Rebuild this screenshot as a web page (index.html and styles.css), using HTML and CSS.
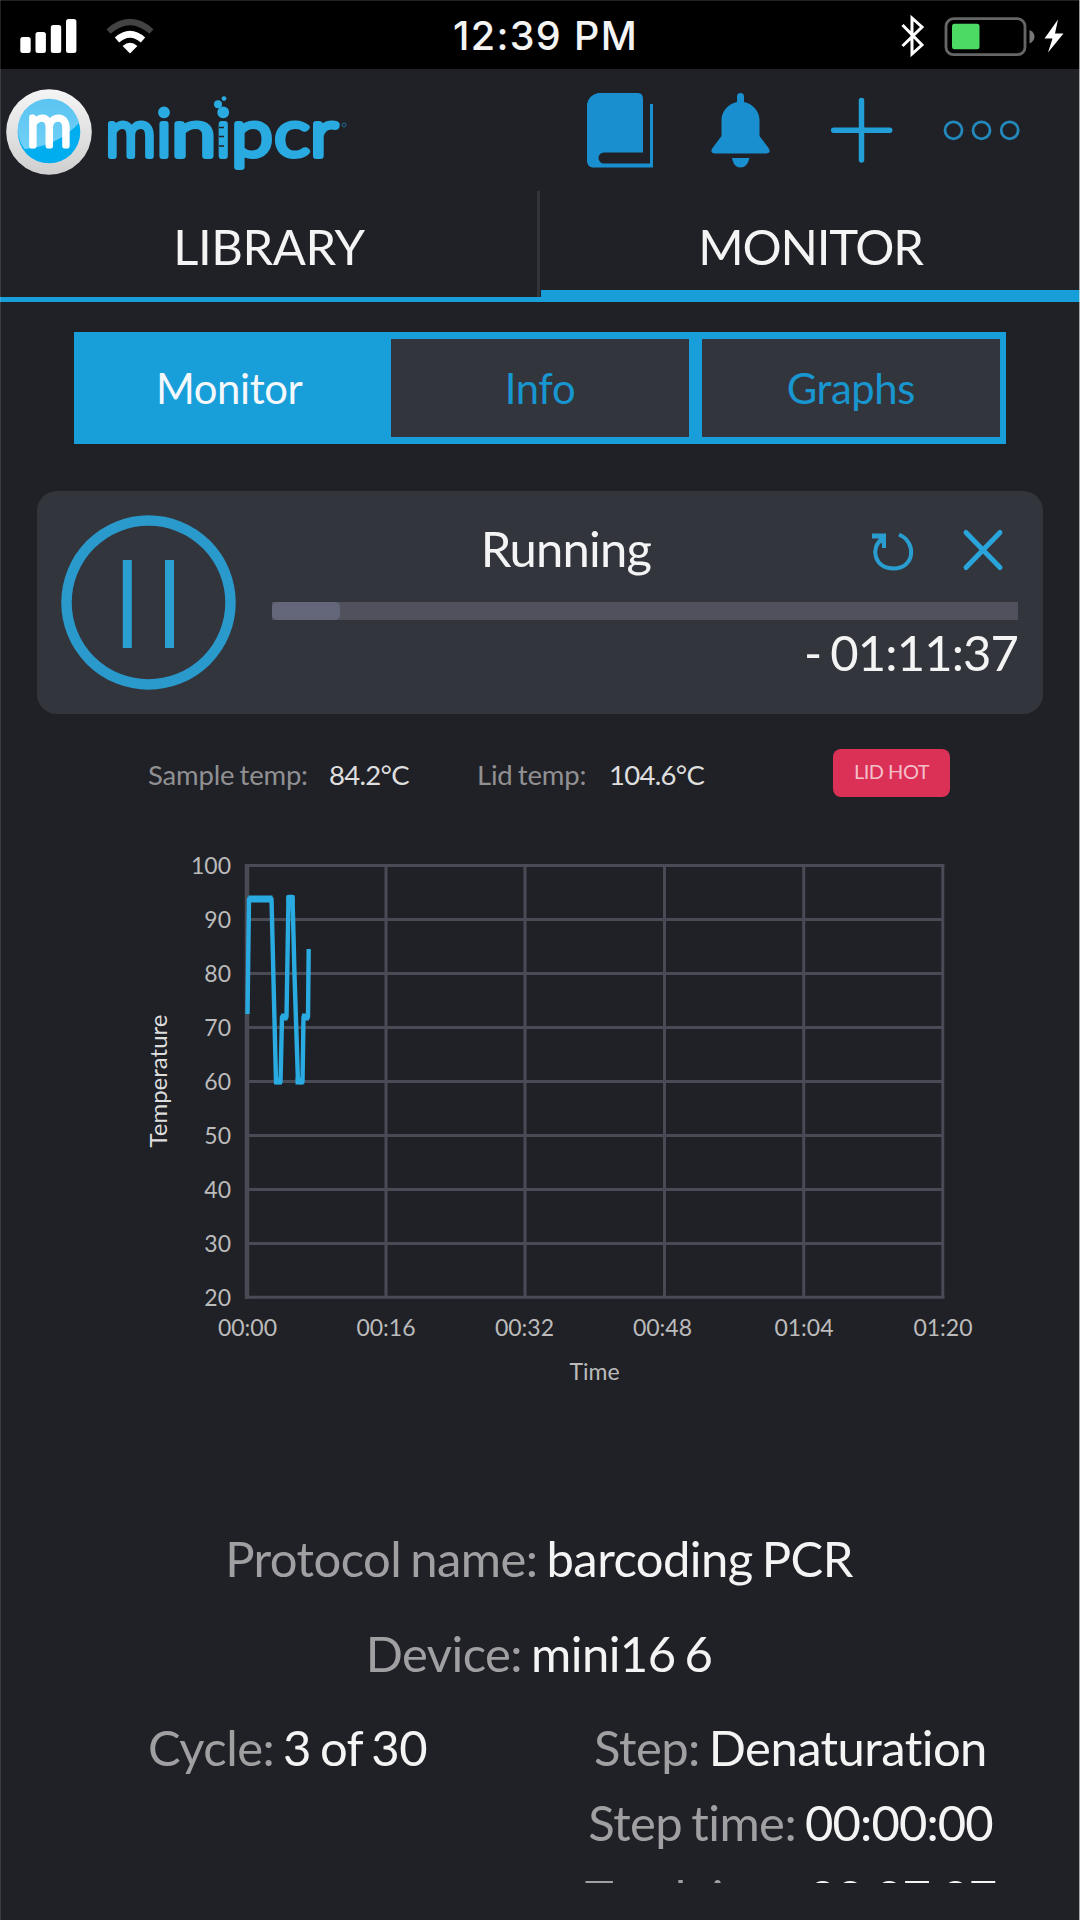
FILE: index.html
```html
<!DOCTYPE html>
<html lang="en">
<head>
<meta charset="utf-8">
<title>miniPCR Monitor</title>
<link rel="stylesheet" href="styles.css">
</head>
<body>
<div class="app">
  <div class="status">
    <svg class="status-left" width="160" height="69" viewBox="0 0 160 69">
      <g fill="#fff">
        <rect x="20.300" y="37" width="10.400" height="16" rx="2.500"/>
        <rect x="35.500" y="32" width="10.400" height="21" rx="2.500"/>
        <rect x="50.800" y="25" width="10.400" height="28" rx="2.500"/>
        <rect x="66" y="19" width="10.400" height="34" rx="2.500"/>
        <path d="M130 53.500L122.600 46Q130 39.500 137.400 46Z"/>
      </g>
      <g fill="none">
        <path d="M117 40Q130 28.500 143 40" stroke="#fff" stroke-width="6.500"/>
        <path d="M108.500 31.500Q130 12.500 151.500 31.500" stroke="#434343" stroke-width="6"/>
      </g>
    </svg>
    <span class="clock">12:39 PM</span>
    <svg class="status-right" width="190" height="69" viewBox="890.500 0 190 69">
      <path d="M903 25L922.500 45L912.500 54V18L922.500 27L903 46" fill="none" stroke="#fff" stroke-width="3"/>
      <rect x="946.500" y="18.700" width="79" height="36" rx="7.500" fill="none" stroke="#666" stroke-width="2.800"/>
      <rect x="952.500" y="23.700" width="27.500" height="25.600" rx="2.500" fill="#4cd964"/>
      <path d="M1030 30Q1035 32 1035 36.500T1030 43.500Z" fill="#777"/>
      <path d="M1058.500 19.500L1045 38.500H1053L1048.500 52.500L1064 33.500H1055.500Z" fill="#fff"/>
    </svg>
  </div>

  <header class="header">
    <svg class="brand" width="360" height="121" viewBox="0 69 360 121">
      <defs>
        <linearGradient id="rim" x1="0" y1="0" x2="0" y2="1"><stop offset="0" stop-color="#f5f5f5"/><stop offset="1" stop-color="#cfcfcf"/></linearGradient>
        <linearGradient id="gloss" x1="0" y1="0" x2="0" y2="1"><stop offset="0" stop-color="#5ac4f1"/><stop offset="1" stop-color="#70d0f7"/></linearGradient>
      </defs>
      <circle cx="49" cy="132" r="42.800" fill="url(#rim)"/>
      <circle cx="49" cy="132" r="31.300" fill="#00aeef"/>
      <path d="M24.500 149A31 31 0 1 1 79 123Q58 146 24.500 149Z" fill="url(#gloss)"/>
      <text class="badge-m" x="27" y="145.500" textLength="44.500" lengthAdjust="spacingAndGlyphs">m</text>
      <g class="wordmark">
        <text x="105.800" y="155.800" textLength="50" lengthAdjust="spacingAndGlyphs">m</text>
        <text x="156.800" y="155.800">i</text>
        <text x="171.500" y="155.800" textLength="44.500" lengthAdjust="spacingAndGlyphs">n</text>
        <text x="216" y="155.800">i</text>
        <text x="231.500" y="155.800" textLength="41" lengthAdjust="spacingAndGlyphs">p</text>
        <text x="274.500" y="155.800" textLength="35" lengthAdjust="spacingAndGlyphs">c</text>
        <text x="310.300" y="155.800" textLength="27" lengthAdjust="spacingAndGlyphs">r</text>
      </g>
      <g fill="#29abe2"><circle cx="218" cy="104.300" r="4"/><circle cx="224" cy="98.600" r="2.400"/></g>
      <path d="M219 127.500h5M219 136.500h5M219 146h5" stroke="#202126" stroke-width="1.400"/>
      <circle cx="344" cy="125" r="2" fill="none" stroke="#1c6c90"/>
    </svg>
    <svg class="actions" width="500" height="121" viewBox="560.500 69 500 121">
      <path d="M598.500 93H638.500Q643.500 93 643.500 99V152.500H604.500A5.500 5.500 0 0 0 604.500 163.500H650.500V104H653.500V167.500H592.500Q587.500 166 587.500 161V104Q589.500 95 598.500 93Z" fill="#198fcf"/>
      <path d="M737.500 102V96.500a3.500 3.500 0 0 1 7 0V102C754 104 760 112 760 120V136L769 148Q772 153 767 153.500H715Q710 153 713 148L722 136V120C722 112 728 104 737.500 102ZM732.500 158H750Q748 167.500 741 167.500T732.500 158Z" fill="#198fcf"/>
      <path d="M862 100.500V160M834.200 130.300H890.200" stroke="#229fd8" stroke-width="5.500" stroke-linecap="round"/>
      <g fill="none" stroke="#2389bc" stroke-width="2.800"><circle cx="954" cy="130.300" r="8.500"/><circle cx="982" cy="130.300" r="8.500"/><circle cx="1010.200" cy="130.300" r="8.500"/></g>
    </svg>
  </header>

  <nav class="tabs">
    <a class="tab">LIBRARY</a>
    <a class="tab tab-active">MONITOR</a>
  </nav>

  <div class="segments">
    <a class="segment segment-active">Monitor</a>
    <a class="segment">Info</a>
    <a class="segment">Graphs</a>
  </div>

  <section class="run">
    <svg class="pause" width="175" height="176" viewBox="0 0 175 176">
      <circle cx="87.500" cy="87.500" r="82" fill="none" stroke="#2a99cb" stroke-width="10.500"/>
      <path d="M66.300 45V133M108.500 45V133" stroke="#2a9fd2" stroke-width="9"/>
    </svg>
    <div class="run-body">
      <div class="run-head">
        <span class="run-title">Running</span>
        <svg width="160" height="60" viewBox="860 520 160 60" fill="none">
          <path d="M899 534.500C917 542 915 568.500 893.500 568.500C874 568.500 870 547.500 882 539" stroke="#2a9dd0" stroke-width="4"/>
          <path d="M872 533.500H886V548H882V543L878 544L879 538.500H872Z" fill="#2a9dd0"/>
          <path d="M966 532.500L1000 567.500M1000 532.500L966 567.500" stroke="#29a5dc" stroke-width="5" stroke-linecap="round"/>
        </svg>
      </div>
      <div class="progress"><div class="progress-fill" style="width:9.100%"></div></div>
      <div class="remaining">- 01:11:37</div>
    </div>
  </section>

  <div class="temps">
    <span class="temp-label sample-label">Sample temp:</span>
    <span class="temp-value sample-value">84.2°C</span>
    <span class="temp-label lid-label">Lid temp:</span>
    <span class="temp-value lid-value">104.6°C</span>
    <span class="lid-hot">LID HOT</span>
  </div>

  <svg class="chart" width="1080" height="560" viewBox="0 840 1080 560">
    <path class="grid" d="M245 865.600H944.500M247 919.600H943M247 973.500H943M247 1027.500H943M247 1081.500H943M247 1135.400H943M247 1189.400H943M247 1243.400H943M245 1297.300H944.500M386 865V1297M525 865V1297M664.500 865V1297M803.700 865V1297M942.800 865V1297"/>
    <path class="axis" d="M247 864V1299"/>
    <path class="trace" d="M247.500 1014L249 899H271.500L273 960L276 1082H280.500L282 1017H286.500L288.500 897H292.500L294.500 975L298 1082H302.500L303.500 1017H308L308.700 949"/>
    <path class="plateau" d="M248.500 899H272.500M286.500 899H294.500M274 1081H282M295.500 1081H303.500M281 1017H287.500M302 1017H309"/>
    <g class="ticks y-ticks">
      <text x="231" y="874.300">100</text><text x="231" y="928.200">90</text><text x="231" y="982.200">80</text><text x="231" y="1036.200">70</text><text x="231" y="1090.100">60</text><text x="231" y="1144">50</text><text x="231" y="1198">40</text><text x="231" y="1252">30</text><text x="231" y="1306">20</text>
    </g>
    <g class="ticks x-ticks">
      <text x="247.500" y="1336.300">00:00</text><text x="386" y="1336.300">00:16</text><text x="524.500" y="1336.300">00:32</text><text x="662.500" y="1336.300">00:48</text><text x="804" y="1336.300">01:04</text><text x="943" y="1336.300">01:20</text>
      <text x="594.500" y="1380.300">Time</text>
    </g>
    <text class="axis-title" transform="translate(167 1081) rotate(-90)">Temperature</text>
  </svg>

  <section class="details">
    <p class="protocol"><span class="key">Protocol name:</span> barcoding PCR</p>
    <p class="device"><span class="key">Device:</span> mini16 6</p>
    <div class="columns">
      <p><span class="key">Cycle:</span> 3 of 30</p>
      <div>
        <p><span class="key">Step:</span> Denaturation</p>
        <p><span class="key">Step time:</span> <span class="digits">00:00:00</span></p>
        <p><span class="key">Total time:</span> <span class="digits">00:07:07</span></p>
      </div>
    </div>
  </section>
</div>
</body>
</html>
```
FILE: styles.css
```css
* { box-sizing: border-box; }
body { margin: 0; background: #202126; }
svg { display: block; flex: none; }
p { margin: 0; }

.app {
  position: relative;
  width: 1080px;
  height: 1920px;
  overflow: hidden;
  display: flex;
  flex-direction: column;
  background: #202126;
  color: #f4f4f4;
  font-family: Lato, sans-serif;
  font-size: 48.960px;
  font-variant-ligatures: none;
}
.app > * { flex: none; }

/* hairline frame over the screen edges */
.app::after {
  content: "";
  position: absolute;
  inset: 0;
  border: solid;
  border-width: 0 1px 0 1px;
  border-color: transparent rgba(255, 255, 255, 0.600) transparent rgba(255, 255, 255, 0.130);
  pointer-events: none;
}

.status {
  height: 69px;
  display: grid;
  grid-template-columns: 1fr auto 1fr;
  background: #000;
  border-top: 1px solid #222;
}
.status svg { margin-top: -1px; }
.status-right { justify-self: end; }
.clock {
  font: 500 39.500px/71px Inter, sans-serif;
  letter-spacing: 1.350px;
  padding-left: 11px;
}

.header {
  height: 121px;
  display: flex;
  justify-content: space-between;
  padding-right: 20px;
}
.wordmark text {
  font-size: 65px;
  font-weight: 300;
  fill: #29abe2;
  stroke: #29abe2;
  stroke-width: 6px;
  stroke-linejoin: round;
}
.badge-m {
  font-size: 58px;
  font-weight: 300;
  fill: #fff;
  stroke: #fff;
  stroke-width: 5px;
  stroke-linejoin: round;
}

.tabs {
  display: grid;
  grid-template-columns: 541px 1fr;
  height: 112px;
}
.tab {
  line-height: 112px;
  text-align: center;
  letter-spacing: -0.400px;
  padding-right: 3px;
  box-shadow: inset 0 -5px #189fda;
  background: linear-gradient(#33353a, #33353a) right 1px top 1px / 3px 106px no-repeat;
}
.tab-active {
  background: none;
  letter-spacing: -1.200px;
  padding-right: 0;
  box-shadow: inset 0 -12px #189fda;
}

.segments {
  display: grid;
  grid-template-columns: repeat(3, 1fr);
  gap: 13.500px;
  height: 112px;
  margin: 30px 74px 0;
  padding: 7px 6.500px;
  background: #189fda;
  font-size: 41.800px;
  letter-spacing: -0.400px;
}
.segment {
  line-height: 98px;
  text-align: center;
  background: #33353d;
  color: #1896d0;
}
.segment-active { background: none; color: #f4f8fb; }

.run {
  display: flex;
  height: 223px;
  margin: 47px 37px 0;
  padding: 0 25px 0 24px;
  border-radius: 20px;
  background: #33353d;
}
.pause { margin-top: 24px; }
.run-body { flex: 1; margin-left: 36px; }
.run-head {
  display: flex;
  justify-content: space-between;
  height: 111px;
  padding-top: 3px;
}
.run-head svg { margin: 26px -2px 0 0; }
.run-title {
  flex: 1;
  line-height: 108px;
  text-align: center;
  letter-spacing: -0.800px;
}
.progress { height: 18px; background: #50515d; }
.progress-fill {
  height: 18px;
  border-radius: 5px;
  background: #64667a;
}
.remaining {
  line-height: 64px;
  text-align: right;
  letter-spacing: -0.900px;
  word-spacing: -2.500px;
}

.temps {
  display: flex;
  height: 48px;
  margin: 35px 130px 0 148px;
  font-size: 27.500px;
  line-height: 52px;
}
.temp-label { color: #909093; letter-spacing: -0.200px; word-spacing: -1.500px; }
.temp-value { color: #dedede; letter-spacing: -0.700px; }
.sample-label { width: 181px; }
.sample-value { width: 148px; }
.lid-label { width: 132px; }
.lid-hot {
  width: 117px;
  height: 48px;
  margin-left: auto;
  border-radius: 8px;
  background: #dc3156;
  color: #f5bfca;
  font-size: 20px;
  line-height: 44px;
  letter-spacing: -0.500px;
  text-align: center;
}

.chart { margin-top: 43px; }
.grid { fill: none; stroke: #484a56; stroke-width: 3px; }
.axis { stroke: #484a56; stroke-width: 4.500px; }
.trace { fill: none; stroke: #29abe2; stroke-width: 4.400px; stroke-linejoin: round; }
.plateau { stroke: #29abe2; stroke-width: 7px; }
.ticks { font-size: 23px; fill: #bbb; }
.y-ticks { text-anchor: end; }
.x-ticks { text-anchor: middle; }
.axis-title { font-size: 24px; fill: #ddd; text-anchor: middle; }

.details {
  height: 361.500px;
  margin: 121px 38px 0 36px;
  overflow: hidden;
  line-height: 75px;
  text-align: center;
  letter-spacing: -0.550px;
  word-spacing: -3px;
}
.key { color: #a0a0a2; }
.digits { letter-spacing: -0.900px; }
.device { margin: 20px 0 19px; }
.columns { display: grid; grid-template-columns: 1fr 1fr; }
```
